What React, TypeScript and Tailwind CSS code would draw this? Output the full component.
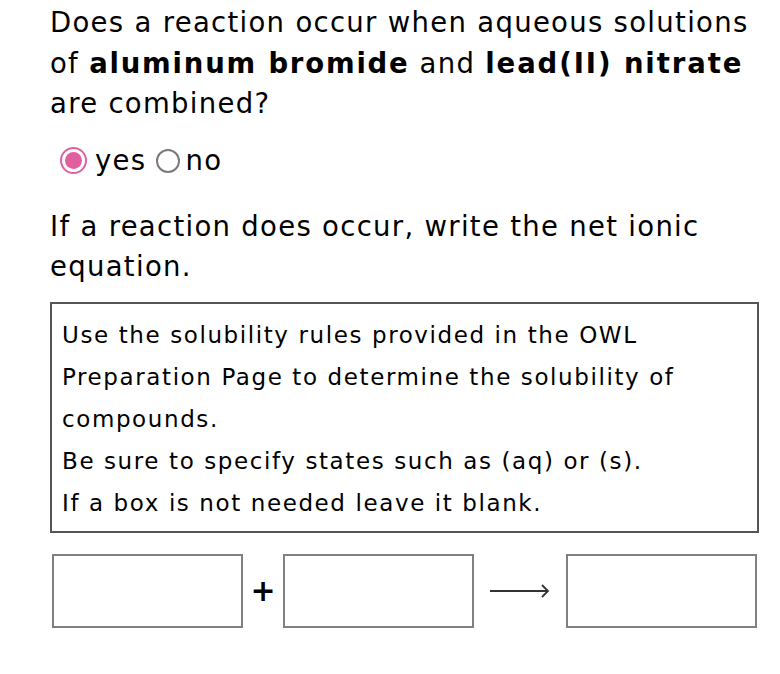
export default function App() {
  return (
    <div className="min-h-[674px] bg-white pl-[50px] pt-[2px] text-black [font-family:'DejaVu_Sans',Verdana,sans-serif]">
      <p className="whitespace-nowrap text-[27.5px] leading-[40.5px] tracking-[1.3px]">
        Does a reaction occur when aqueous solutions
        <br />
        of <b className="tracking-[1.8px]">aluminum bromide</b> and{" "}
        <b className="tracking-[1.9px]">lead(II) nitrate</b>
        <br />
        are combined?
      </p>

      <div className="mt-[19px] flex h-[36px] items-center pl-[10px] text-[27.5px] tracking-[1.3px]">
        <span className="flex h-[27px] w-[27px] items-center justify-center rounded-full border-[2px] border-[#e0609f] bg-white">
          <span className="h-[17px] w-[17px] rounded-full bg-[#e0609f]" />
        </span>
        <span className="ml-[8px]">yes</span>
        <span className="ml-[10px] h-[24px] w-[24px] rounded-full border-[2px] border-[#7a7a7a]" />
        <span className="ml-[5px]">no</span>
      </div>

      <p className="mt-[27px] whitespace-nowrap text-[27.5px] leading-[40.5px] tracking-[1.3px]">
        If a reaction does occur, write the net ionic
        <br />
        equation.
      </p>

      <div className="mt-[15px] mr-[21px] whitespace-nowrap border-[2px] border-[#555] pt-[10px] pb-[7px] pl-[10px] text-[23px] leading-[42px] tracking-[1.6px]">
        <p>
          Use the solubility rules provided in the OWL
          <br />
          Preparation Page to determine the solubility of
          <br />
          compounds.
        </p>
        <p>Be sure to specify states such as (aq) or (s).</p>
        <p>If a box is not needed leave it blank.</p>
      </div>

      <div className="mt-[21px] ml-[2px] flex items-center">
        <div className="h-[74px] w-[191px] border-[2px] border-[#808080]" />
        <span className="w-[40px] text-center text-[30px] font-bold leading-none">+</span>
        <div className="h-[74px] w-[191px] border-[2px] border-[#808080]" />
        <svg className="mx-[16px]" width="60" height="16" viewBox="0 0 60 16">
          <line x1="0" y1="8" x2="58" y2="8" stroke="#333" strokeWidth="2.2" />
          <path d="M52 2 L58 8 L52 14" fill="none" stroke="#333" strokeWidth="1.8" />
        </svg>
        <div className="h-[74px] w-[191px] border-[2px] border-[#808080]" />
      </div>
    </div>
  );
}
